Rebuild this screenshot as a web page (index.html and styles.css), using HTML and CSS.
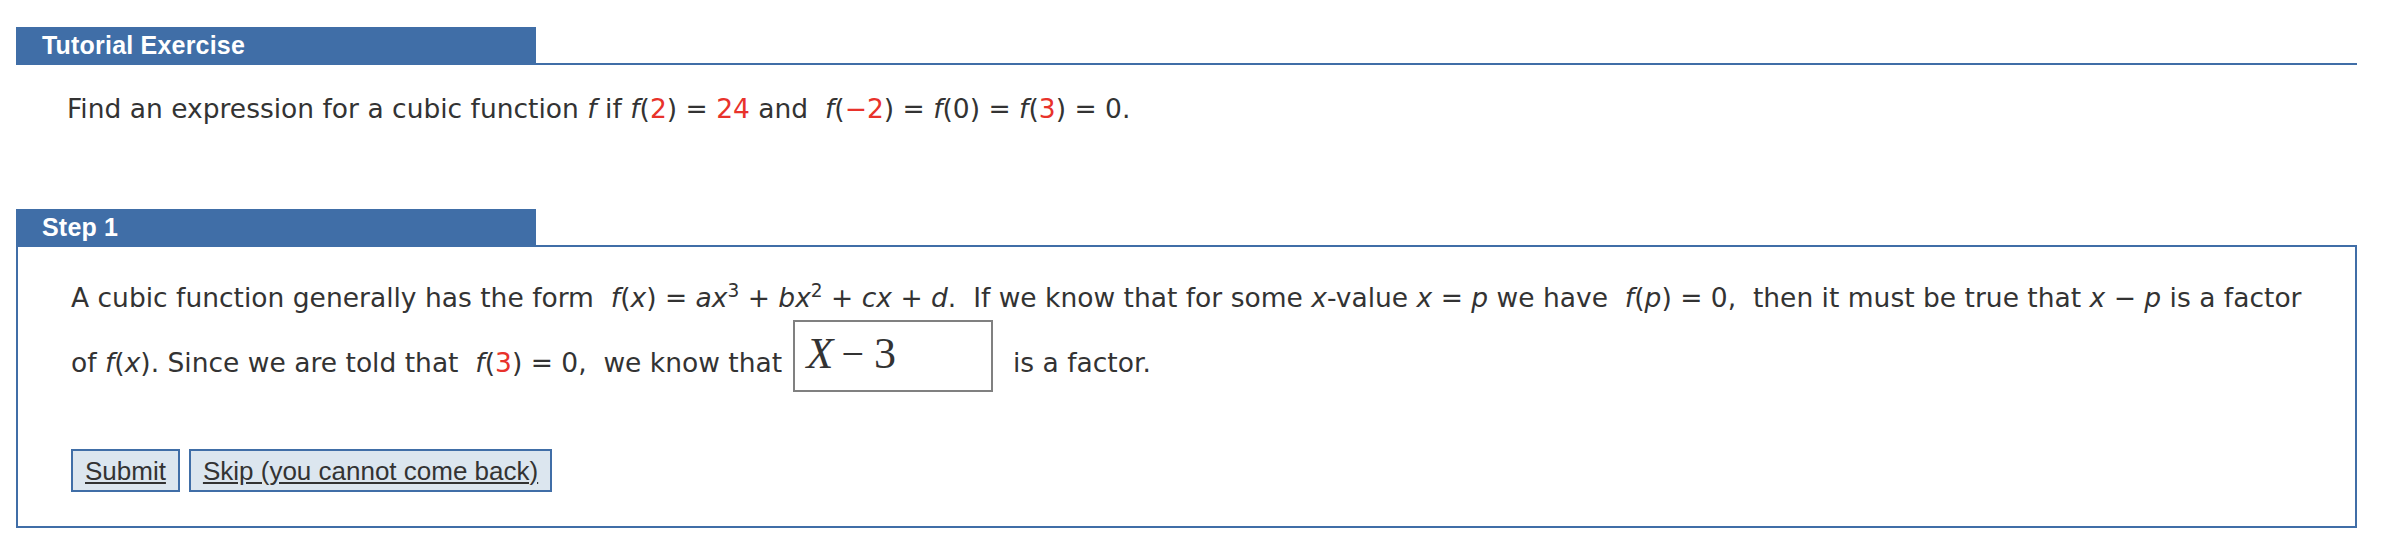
FILE: index.html
```html
<!DOCTYPE html>
<html>
<head>
<meta charset="utf-8">
<link rel="stylesheet" href="styles.css">
</head>
<body>
<div class="page">
  <div class="head">
    <div class="tab">Tutorial Exercise</div>
    <div class="rule"></div>
  </div>
  <p class="question">Find an expression for a cubic function <i>f</i> if <i>f</i>(<span class="red">2</span>) = <span class="red">24</span> and&nbsp; <i>f</i>(<span class="red">−2</span>) = <i>f</i>(0) = <i>f</i>(<span class="red">3</span>) = 0.</p>

  <div class="head step-head">
    <div class="tab">Step 1</div>
    <div class="rule"></div>
  </div>
  <div class="step">
    <p class="line1">A cubic function generally has the form&nbsp; <i>f</i>(<i>x</i>) = <i>ax</i><sup>3</sup> + <i>bx</i><sup>2</sup> + <i>cx</i> + <i>d</i>.&nbsp; If we know that for some <i>x</i>-value <i>x</i> = <i>p</i> we have&nbsp; <i>f</i>(<i>p</i>) = 0,&nbsp; then it must be true that <i>x</i> − <i>p</i> is a factor</p>
    <p class="line2">of <i>f</i>(<i>x</i>). Since we are told that&nbsp; <i>f</i>(<span class="red">3</span>) = 0,&nbsp; we know that <span class="answer"><span class="mx">X</span><span class="mo">−</span><span class="mn">3</span></span> is a factor.</p>
    <div class="buttons">
      <button class="btn">Submit</button>
      <button class="btn">Skip (you cannot come back)</button>
    </div>
  </div>
</div>
</body>
</html>
```
FILE: styles.css
```css
html, body {
  margin: 0;
  padding: 0;
  background: #ffffff;
}
.page {
  padding: 27px 31px 0 16px;
  font-family: "DejaVu Sans", Verdana, sans-serif;
  color: #333333;
  font-size: 26.5px;
}
.head {
  display: flex;
  align-items: flex-end;
  height: 38px;
}
.tab {
  width: 494px;
  height: 38px;
  background: #406ea7;
  color: #ffffff;
  font-family: "Liberation Sans", Arial, sans-serif;
  font-weight: bold;
  font-size: 25px;
  line-height: 36px;
  padding-left: 26px;
  letter-spacing: 0.2px;
}
.rule {
  flex: 1;
  border-bottom: 2px solid #406ea7;
}
.question {
  margin: 27px 0 0 51px;
  line-height: 34px;
}
.red {
  color: #e8322b;
}
.step-head {
  margin-top: 83px;
}
.step {
  border: 2px solid #406ea7;
  border-top: none;
  height: 281px;
  box-sizing: border-box;
  padding: 33px 0 0 53px;
}
.step p {
  margin: 0;
}
.line1 {
  line-height: 36px;
}
.line2 {
  margin-top: 12px !important;
  line-height: 36px;
}
sup {
  font-size: 70%;
  line-height: 0;
  vertical-align: 0.55em;
}
.answer {
  display: inline-block;
  vertical-align: middle;
  width: 200px;
  height: 72px;
  border: 2px solid #808080;
  margin: 0 12px 0 2px;
  padding-left: 12px;
  box-sizing: border-box;
  font-family: "Liberation Serif", "Times New Roman", serif;
  font-size: 44px;
  line-height: 64px;
  color: #333333;
  position: relative;
  top: -8px;
}
.mx {
  font-style: italic;
}
.mo {
  font-size: 40px;
  margin: 0 10px 0 8px;
  position: relative;
  top: -1px;
}
.buttons {
  margin-top: 49px;
  display: flex;
  gap: 9px;
}
.btn {
  font-family: "Liberation Sans", Arial, sans-serif;
  font-size: 26px;
  color: #333333;
  text-decoration: underline;
  background: #dce6ef;
  border: 2px solid #406ea7;
  height: 43px;
  padding: 0 12px;
  margin: 0;
  border-radius: 0;
  line-height: 1;
}
```
